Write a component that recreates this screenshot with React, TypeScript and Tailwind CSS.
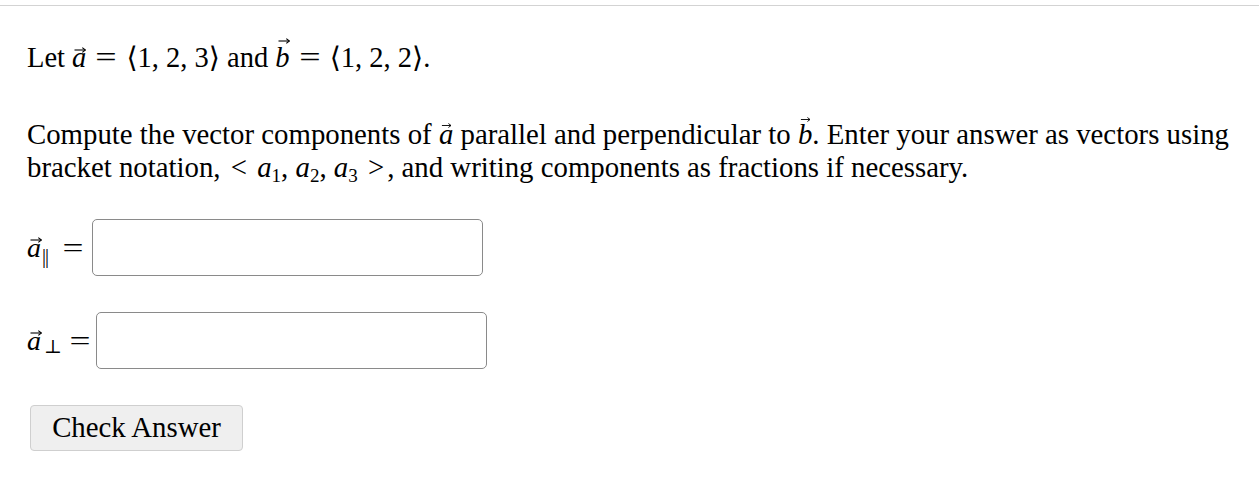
import React from "react";

const serif = "font-['Liberation_Serif','DejaVu_Serif',serif]";

function Arrow({ className }: { className: string }) {
  return (
    <svg
      viewBox="0 0 12 6"
      className={"absolute " + className}
      fill="none"
      stroke="currentColor"
      strokeWidth="1.1"
    >
      <path d="M0.5 3H11.2" />
      <path d="M8.3 0.6L11.4 3L8.3 5.4" />
    </svg>
  );
}

// letter with an arrow over it
function Vec({ letter, arrow }: { letter: string; arrow: string }) {
  return (
    <span className="relative inline-block italic leading-none">
      {letter}
      <Arrow className={arrow} />
    </span>
  );
}

function Eq({ className = "" }: { className?: string }) {
  return <span className={"inline-block scale-x-133 " + className}>=</span>;
}

function AnswerRow({ sub, subClass, gap }: { sub: string; subClass: string; gap: string }) {
  return (
    <div className="flex items-center">
      <span className="flex items-baseline text-[28px]">
        <Vec letter="a" arrow="left-[3px] top-[3px] h-[6px] w-[12px]" />
        <span className={subClass}>{sub}</span>
      </span>
      <Eq className={"text-[28px] " + gap} />
      <input
        type="text"
        className="h-[57px] w-[391px] rounded-[5px] border border-[#8a8a8a] bg-white px-2 text-[24px] outline-none"
      />
    </div>
  );
}

export default function App() {
  return (
    <div className={"min-h-[502px] bg-white text-black " + serif}>
      <div className="pt-[5px]">
        <div className="h-px w-[1259px] bg-[#d3d3d3]" />
      </div>

      <div className="pl-[27px]">
        <p className="mt-[32px] text-[28.5px] leading-[40px]">
          Let <Vec letter="a" arrow="left-[2px] top-[3px] h-[6px] w-[12px]" />
          <Eq className="mx-[12px]" />
          ⟨1, 2, 3⟩ and{" "}
          <Vec letter="b" arrow="left-[3px] top-[-6px] h-[6px] w-[12px]" />
          <Eq className="mx-[12px]" />
          ⟨1, 2, 2⟩.
        </p>

        <p className="mt-[40px] w-[1215px] text-[28.8px] leading-[33px]">
          Compute the vector components of{" "}
          <Vec letter="a" arrow="left-[2px] top-[3px] h-[5px] w-[11px]" /> parallel and
          perpendicular to <Vec letter="b" arrow="left-[2px] top-[-3px] h-[5px] w-[11px]" />.
          Enter your answer as vectors using bracket notation,{" "}
          <span className="mx-[3px]">&lt;</span> <i>a</i>
          <sub className="text-[19px] leading-none">1</sub>, <i>a</i>
          <sub className="text-[19px] leading-none">2</sub>, <i>a</i>
          <sub className="text-[19px] leading-none">3</sub>{" "}
          <span className="mx-[3px]">&gt;</span>, and writing components as fractions if
          necessary.
        </p>

        <div className="mt-[35px] flex flex-col gap-[36px]">
          <AnswerRow
            sub="||"
            subClass="ml-[1px] translate-y-[6px] text-[20px] leading-none tracking-[-1px]"
            gap="ml-[17px] mr-[11px]"
          />
          <AnswerRow
            sub="⊥"
            subClass="ml-[3px] translate-y-[3px] text-[19px] leading-none"
            gap="ml-[10px] mr-[8px]"
          />
        </div>

        <button
          type="button"
          className="ml-[3px] mt-[36px] h-[46px] w-[213px] rounded-[4px] border border-[#cfcfcf] bg-[#efefef] text-[28.8px] text-black"
        >
          Check Answer
        </button>
      </div>
    </div>
  );
}
